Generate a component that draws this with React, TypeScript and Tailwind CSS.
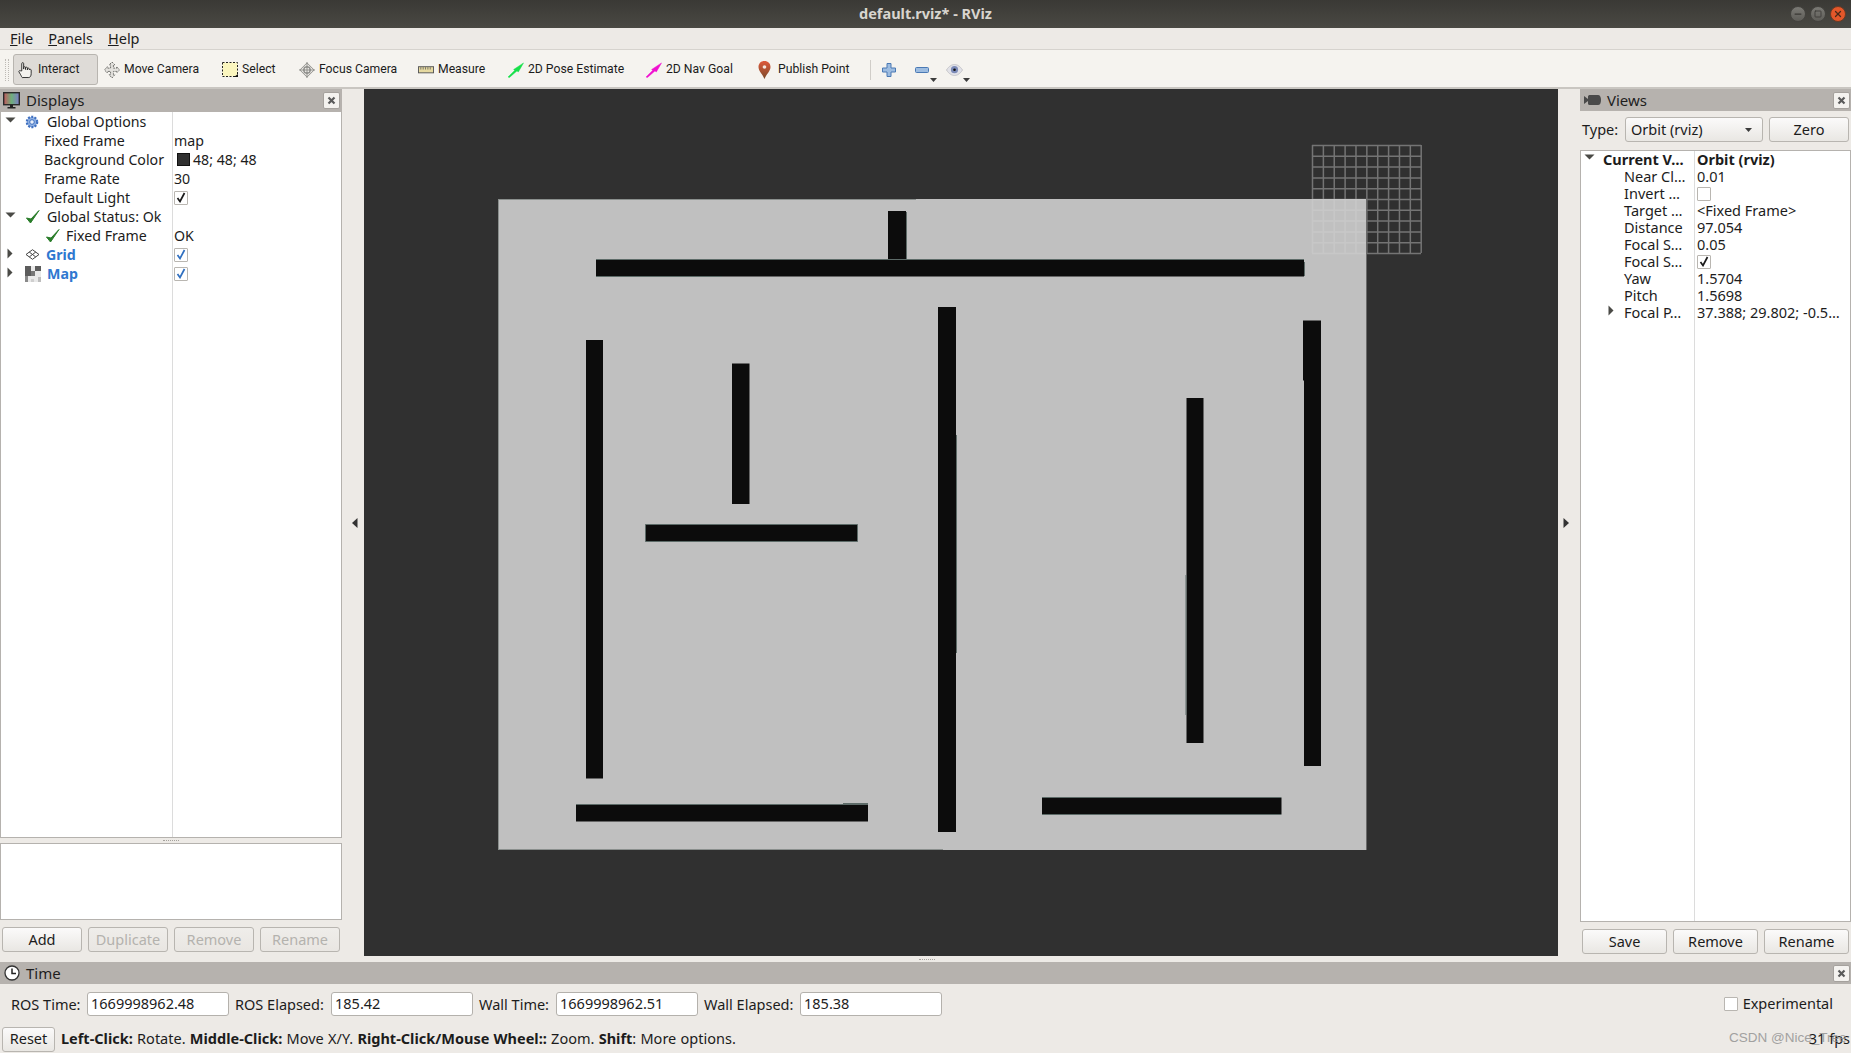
import React from 'react';
import { X, Minus, Square } from 'lucide-react';

// RViz main window, sizes read off the 1851x1053 capture
const ui = "font-['Noto_Sans','Open_Sans',sans-serif]";

const Arrow = ({ open }: { open?: boolean }) =>
  open ? (
    <svg width="11" height="10" viewBox="0 0 11 10"><path d="M.5 2.500h10L5.500 7.500z" fill="#4a4a46" /></svg>
  ) : (
    <svg width="10" height="11" viewBox="0 0 10 11"><path d="M2.500 .5v10L7.500 5.500z" fill="#4a4a46" /></svg>
  );

const Check = ({ on, blue }: { on?: boolean; blue?: boolean }) => (
  <div className="w-[14px] h-[14px] bg-white border border-[#b9b6b1] rounded-[1px] flex items-center justify-center">
    {on && (
      <svg width="10" height="11" viewBox="0 0 10 11">
        <path d="M1.500 6 L4 9.500 L8.500 1" fill="none" stroke={blue ? '#2f6fc0' : '#1a1a1a'} strokeWidth="1.700" />
      </svg>
    )}
  </div>
);

const OkMark = () => (
  <svg width="16" height="16" viewBox="0 0 16 16">
    <path d="M1.500 9 L5.500 14 L14 1.500 L6 10 Z" fill="#2a7d2a" stroke="#2a7d2a" strokeWidth="1" strokeLinejoin="round" />
  </svg>
);

const CloseBox = () => (
  <div className="w-[17px] h-[17px] bg-[#f4f2ef] border border-[#a5a19d] rounded-[2px] flex items-center justify-center">
    <svg width="9" height="9" viewBox="0 0 9 9"><path d="M1.500 1.500l6 6M7.500 1.500l-6 6" stroke="#5a5a5a" strokeWidth="2.200" /></svg>
  </div>
);

const Btn = ({ label, off, w }: { label: string; off?: boolean; w: string }) => (
  <div
    className={`${w} h-[25px] flex items-center justify-center rounded-[3px] border border-[#b8b5b0] bg-gradient-to-b text-[14.5px] ${
      off ? 'from-[#efedea] to-[#e9e6e2] text-[#b4b2ae]' : 'from-[#fbfafa] to-[#e9e7e3] text-[#1c1c1c]'
    }`}
  >
    {label}
  </div>
);

const Field = ({ value, w }: { value: string; w: string }) => (
  <div className={`${w} h-[24px] bg-white border border-[#b4b1ac] rounded-[3px] pl-[3px] flex items-center text-[14.5px] text-[#1c1c1c]`}>
    {value}
  </div>
);

const DockTitle = ({ icon, title, h, pad }: { icon: React.ReactNode; title: string; h: string; pad: string }) => (
  <div className={`${h} ${pad} bg-[#b6b2ae] flex items-center shrink-0`}>
    {icon}
    <span className="text-[15px] text-[#1e1e1e] ml-[6px] flex-1">{title}</span>
    <CloseBox />
  </div>
);

const Row = ({
  arrow,
  icon,
  name,
  value,
  nameClass = '',
  indent = 'pl-[43px]',
}: {
  arrow?: 'open' | 'closed';
  icon?: React.ReactNode;
  name: string;
  value?: React.ReactNode;
  nameClass?: string;
  indent?: string;
}) => (
  <div className="flex h-[19px] items-center text-[14.2px] text-[#1c1c1c]">
    <div className={`w-[171px] flex items-center relative ${indent} ${nameClass}`}>
      {arrow && (
        <span className="absolute left-[4px] top-[4px]">
          <Arrow open={arrow === 'open'} />
        </span>
      )}
      {icon}
      <span className="whitespace-nowrap">{name}</span>
    </div>
    <div className="pl-[2px] flex items-center">{value}</div>
  </div>
);

const VRow = ({ name, value, bold, arrow }: { name: string; value?: React.ReactNode; bold?: boolean; arrow?: 'open' | 'closed' }) => (
  <div className={`flex h-[17px] items-center text-[14.5px] text-[#1c1c1c] ${bold ? 'font-bold' : ''}`}>
    <div className={`w-[113px] relative whitespace-nowrap ${bold ? 'pl-[22px]' : 'pl-[43px]'}`}>
      {arrow === 'open' && (
        <span className="absolute left-[3px] top-[3px]"><Arrow open /></span>
      )}
      {arrow === 'closed' && (
        <span className="absolute left-[25px] top-[3px]"><Arrow /></span>
      )}
      {name}
    </div>
    <div className="pl-[3px] whitespace-nowrap flex items-center">{value}</div>
  </div>
);

const Tool = ({ w, active, icon, label }: { w: string; active?: boolean; icon: React.ReactNode; label: string }) => (
  <div
    className={`${w} h-[31px] flex items-center gap-[4px] text-[12.2px] whitespace-nowrap text-[#1c1c1c] font-['Roboto',sans-serif] ${
      active ? 'pl-[4px] bg-[#dedbd7] border border-[#b8b5b0] rounded-[3px]' : 'pl-[6px]'
    }`}
  >
    <span className="w-[16px] h-[18px] flex items-center justify-start shrink-0">{icon}</span>
    {label}
  </div>
);

const HandIcon = () => (
  <svg width="17" height="18" viewBox="0 0 17 18">
    <path d="M4 10V2.200a1 1 0 0 1 2 0V8V6.500a1 1 0 0 1 2 0V8.500V7a1 1 0 0 1 2 0V9V8a1 1 0 0 1 2 0v1 c0-1 2-1 2 0v4c0 2-1 4-2.500 4h-7C4 17 3.500 15 2.500 13.500L1 11c-.5-1 1-2 2-1z" fill="#f4f2ee" stroke="#2b2b2b" strokeWidth="1" />
  </svg>
);

const MoveIcon = () => (
  <svg width="17" height="18" viewBox="0 0 17 18">
    <path d="M8.500 .5l3 3H10v3.500h3.500V5.500l3 3.500-3 3V10.500H10V14h1.500l-3 3.500-3-3.500H7v-3.500H3.500V12l-3-3 3-3.500V7H7V3.500H5.500z" fill="#e4e2de" stroke="#6a6a66" strokeWidth="1" strokeDasharray="2 1" />
  </svg>
);

const SelectIcon = () => (
  <svg width="16" height="16" viewBox="0 0 16 16">
    <rect x=".5" y=".5" width="15" height="14" fill="#fbf6bf" stroke="#222" strokeDasharray="2 1.500" />
    <path d="M12 15h4v-3z" fill="#111" />
  </svg>
);

const FocusIcon = () => (
  <svg width="18" height="18" viewBox="0 0 18 18" fill="none" stroke="#8a8a86">
    <path d="M9 1l8 8-8 8-8-8z" fill="#e8e6e2" />
    <circle cx="9" cy="9" r="4" />
    <path d="M9 0v18M0 9h18M6 6h6v6H6z" />
  </svg>
);

const RulerIcon = () => (
  <svg width="17" height="8" viewBox="0 0 17 8">
    <rect x=".5" y=".5" width="16" height="6.500" fill="#e6d9a0" stroke="#555" />
    <path d="M3 1v2.500M5.500 1v2.500M8 1v2.500M10.500 1v2.500M13 1v2.500" stroke="#555" strokeWidth=".8" />
  </svg>
);

const SlantArrow = ({ color }: { color: string }) => (
  <svg width="17" height="16" viewBox="0 0 17 16">
    <path d="M0 15.500L7 8.500L6 7.500L16.500 .5L11 10L9.500 9L1.500 16z" fill={color} stroke={color} strokeWidth=".5" />
  </svg>
);

const PinIcon = () => (
  <svg width="13" height="18" viewBox="0 0 13 18">
    <defs>
      <linearGradient id="pin" x1="0" y1="0" x2="0" y2="1">
        <stop offset="0" stopColor="#de5a3c" />
        <stop offset="1" stopColor="#7a4a2a" />
      </linearGradient>
    </defs>
    <path d="M6.500 0C3 0 .5 2.500.5 6c0 4 4 7 6 12 2-5 6-8 6-12C12.500 2.500 10 0 6.500 0z" fill="url(#pin)" />
    <circle cx="6.500" cy="6" r="1.800" fill="#f2e9e2" />
  </svg>
);

const PlusIcon = () => (
  <svg width="14" height="14" viewBox="0 0 14 14">
    <path d="M5 .5h4V5h4.500v4H9v4.500H5V9H.5V5H5z" fill="#9dbce0" stroke="#4a79b4" />
  </svg>
);

const MinusIcon = () => (
  <svg width="14" height="6" viewBox="0 0 14 6">
    <rect x=".5" y=".5" width="13" height="5" rx="1" fill="#9dbce0" stroke="#4a79b4" />
  </svg>
);

const EyeIcon = () => (
  <svg width="17" height="12" viewBox="0 0 17 12">
    <path d="M.5 6C3 2 6 .5 8.500 .5S14 2 16.500 6c-2.500 4-5.500 5.500-8 5.500S3 10 .5 6z" fill="#e2e2e8" stroke="#c4c4c8" />
    <circle cx="8.500" cy="5.700" r="3.600" fill="#7c8bb8" />
    <circle cx="8.500" cy="5.700" r="1.300" fill="#111" />
  </svg>
);

const DropTick = () => (
  <svg width="7" height="4" viewBox="0 0 7 4"><path d="M0 0h7L3.500 4z" fill="#3c3c3c" /></svg>
);

const MonitorIcon = () => (
  <svg width="17" height="18" viewBox="0 0 17 18">
    <defs>
      <linearGradient id="scr" x1="0" y1="0" x2="1" y2="0">
        <stop offset="0" stopColor="#c4585c" />
        <stop offset=".5" stopColor="#6fae7c" />
        <stop offset="1" stopColor="#7c7cc8" />
      </linearGradient>
    </defs>
    <rect x=".7" y=".7" width="15.600" height="12" fill="url(#scr)" stroke="#2a2a2a" strokeWidth="1.400" />
    <path d="M7 13h3v2h2.500v1.500h-8V15H7z" fill="#222" />
  </svg>
);

const GearIcon = () => (
  <svg width="14" height="14" viewBox="0 0 14 14">
    <circle cx="7" cy="7" r="5.200" fill="#8fb0e2" stroke="#3f70c0" strokeWidth="2.200" strokeDasharray="2 1.300" />
    <circle cx="7" cy="7" r="2.300" fill="#eaf0fa" stroke="#3f70c0" />
  </svg>
);

const GridIcon = () => (
  <svg width="15" height="11" viewBox="0 0 15 11" fill="none" stroke="#444">
    <path d="M7.500 .7L14 5.500 7.500 10.300 1 5.500zM4.200 3l6.500 4.900M10.800 3L4.300 7.900" />
  </svg>
);

const MapIcon = () => (
  <svg width="16" height="16" viewBox="0 0 16 16" shapeRendering="crispEdges">
    <rect width="16" height="16" fill="#e9e9e9" />
    <rect width="6" height="10" fill="#5c5c5c" />
    <rect x="10" width="6" height="5" fill="#5c5c5c" />
    <rect x="6" y="5" width="4" height="5" fill="#777" />
    <rect y="10" width="3" height="6" fill="#8a8a8a" />
    <rect x="13" y="11" width="3" height="5" fill="#bdbdbd" />
    <rect x="6" y="13" width="3" height="3" fill="#cfcfcf" />
  </svg>
);

const CameraIcon = () => (
  <svg width="17" height="10" viewBox="0 0 17 10">
    <path d="M0 1l4 3V1.500C4 .5 5 0 6 0h8c2 0 3 2 3 5s-1 5-3 5H6c-1 0-2-.5-2-1.500V6l-4 3z" fill="#4a4a4a" />
  </svg>
);

const ClockIcon = () => (
  <svg width="16" height="16" viewBox="0 0 16 16">
    <circle cx="8" cy="8" r="7" fill="#fff" stroke="#333" strokeWidth="1.300" />
    <path d="M8 3.500V8.500H12" fill="none" stroke="#222" strokeWidth="1.500" />
  </svg>
);

const Dots = () => <div className="w-[16px] border-t border-dotted border-[#a5a29d]" />;

// wall rectangles of the occupancy grid, in page pixels
const walls = [
  [596, 259.500, 708, 17],
  [888, 211, 18, 49],
  [586, 340, 17, 438.500],
  [732, 363.500, 17.500, 140.500],
  [645.500, 524.500, 212, 17],
  [576, 804.500, 292, 17],
  [938, 307, 18, 525],
  [1186.500, 398, 17, 345],
  [1304, 378, 17, 388],
  [1303, 320.500, 18, 60],
  [1042, 797.500, 239.500, 17],
];

const gridLines = Array.from({ length: 11 }, (_, i) => i);

const MapView = () => (
  <svg className="block w-full h-full" viewBox="364 89 1194 867">
    <rect x="364" y="89" width="1194" height="867" fill="#303030" />
    <g stroke="#747474" strokeWidth="1.500">
      {gridLines.map(i => (
        <path key={i} d={`M${1312.5 + i * 10.87} 145V253M1312 ${145.5 + i * 10.8}H1421`} />
      ))}
    </g>
    {/* map is slightly see through, the grid shows as lighter lines */}
    <rect x="498.500" y="199" width="868" height="651" fill="#d0d0d0" fillOpacity="0.9" />
    <path d="M498.500 199.500H916M498.500 849.500H943M498.500 199V850" stroke="#8a8f8d" strokeWidth="1" fill="none" />
    <path d="M1366.500 199V850" stroke="#6a6a6a" strokeWidth="1" fill="none" />
    {walls.map(([x, y, w, h], i) => (
      <rect key={i} x={x} y={y} width={w} height={h} fill="#0c0c0c" />
    ))}
    <path
      d="M596 276.500H722M956.500 435V653M1186 575V715M906.500 212V259M1304.500 262V276M596 259.500H1304M645.500 524.500H857.500V541.500H645.500ZM1042 814.500H1281M1042 797.500H1281M576 804.500H868"
      stroke="#5d6b68"
      strokeWidth="1"
      fill="none"
    />
    <rect x="843" y="803" width="25" height="2" fill="#5d6b68" />
  </svg>
);

export default function App() {
  return (
    <div className={`${ui} w-[1851px] h-[1053px] overflow-hidden flex flex-col bg-[#edeae6] relative`}>
      {/* window title */}
      <div className="h-[28px] shrink-0 bg-gradient-to-b from-[#3a3935] to-[#4a4943] flex items-center relative">
        <span className="flex-1 text-center text-[14.5px] font-bold text-[#d8d5cf]">default.rviz* - RViz</span>
        <div className="absolute right-[5px] top-[6px] flex gap-[4px]">
          <div className="w-[16px] h-[16px] rounded-full bg-gradient-to-b from-[#7b7a75] to-[#5e5d58] border border-[#44433f] flex items-center justify-center">
            <Minus size={10} color="#3a3935" strokeWidth={3} />
          </div>
          <div className="w-[16px] h-[16px] rounded-full bg-gradient-to-b from-[#7b7a75] to-[#5e5d58] border border-[#44433f] flex items-center justify-center">
            <Square size={8} color="#3a3935" strokeWidth={2.500} />
          </div>
          <div className="w-[16px] h-[16px] rounded-full bg-[#e4572a] border border-[#6b3a24] flex items-center justify-center">
            <X size={10} color="#4a2a18" strokeWidth={3} />
          </div>
        </div>
      </div>

      {/* menu bar */}
      <div className="h-[22px] shrink-0 flex items-center pl-[10px] gap-[15px] text-[14.5px] text-[#1c1c1c] border-b border-[#d6d3ce]">
        <span><span className="underline">F</span>ile</span>
        <span><span className="underline">P</span>anels</span>
        <span><span className="underline">H</span>elp</span>
      </div>

      {/* tool bar */}
      <div className="h-[39px] shrink-0 bg-[#f5f3ef] border-b-2 border-[#c9c6c1] flex items-center pt-[2px]">
        <div className="w-[13px] pl-[5px] shrink-0">
          <div className="w-[4px] h-[22px] border-x border-dotted border-[#bdbab5]" />
        </div>
        <Tool w="w-[85px]" active icon={<HandIcon />} label="Interact" />
        <Tool w="w-[118px]" icon={<MoveIcon />} label="Move Camera" />
        <Tool w="w-[77px]" icon={<SelectIcon />} label="Select" />
        <Tool w="w-[119px]" icon={<FocusIcon />} label="Focus Camera" />
        <Tool w="w-[90px]" icon={<RulerIcon />} label="Measure" />
        <Tool w="w-[138px]" icon={<SlantArrow color="#17e04a" />} label="2D Pose Estimate" />
        <Tool w="w-[112px]" icon={<SlantArrow color="#f010d0" />} label="2D Nav Goal" />
        <Tool w="w-[118px]" icon={<PinIcon />} label="Publish Point" />
        <div className="w-px h-[20px] bg-[#d0cdc8]" />
        <div className="w-[11px] shrink-0" />
        <PlusIcon />
        <div className="w-[19px] shrink-0" />
        <MinusIcon />
        <div className="w-[1px] shrink-0" />
        <div className="pt-[20px]"><DropTick /></div>
        <div className="w-[9px] shrink-0" />
        <EyeIcon />
        <div className="pt-[20px]"><DropTick /></div>
      </div>

      {/* docks and 3d view */}
      <div className="h-[867px] shrink-0 flex">
        <div className="w-[342px] shrink-0 flex flex-col">
          <DockTitle icon={<MonitorIcon />} title="Displays" h="h-[23px]" pad="pl-[3px] pr-[2px]" />
          <div className="h-[726px] bg-white border border-t-0 border-[#b5b2ae] relative">
            <div className="absolute left-[171px] top-0 bottom-0 w-px bg-[#dcdcdc]" />
            <Row arrow="open" indent="pl-[24px]" icon={<span className="mr-[8px]"><GearIcon /></span>} name="Global Options" />
            <Row name="Fixed Frame" value="map" />
            <Row
              name="Background Color"
              value={
                <>
                  <span className="w-[13px] h-[13px] bg-[#303030] border border-[#111] mx-[3px]" />
                  <span>48; 48; 48</span>
                </>
              }
            />
            <Row name="Frame Rate" value="30" />
            <Row name="Default Light" value={<Check on />} />
            <Row arrow="open" indent="pl-[24px]" icon={<span className="mr-[6px]"><OkMark /></span>} name="Global Status: Ok" />
            <Row indent="pl-[44px]" icon={<span className="mr-[5px]"><OkMark /></span>} name="Fixed Frame" value="OK" />
            <Row arrow="closed" indent="pl-[24px]" nameClass="font-bold text-[#2f78d0]" icon={<span className="mr-[6px]"><GridIcon /></span>} name="Grid" value={<Check on blue />} />
            <Row arrow="closed" indent="pl-[24px]" nameClass="font-bold text-[#2f78d0]" icon={<span className="mr-[6px]"><MapIcon /></span>} name="Map" value={<Check on blue />} />
          </div>
          <div className="h-[5px] flex items-center justify-center"><Dots /></div>
          <div className="h-[77px] bg-white border border-[#b5b2ae]" />
          <div className="mt-[7px] flex gap-[6px] pl-[2px]">
            <Btn w="w-[80px]" label="Add" />
            <Btn w="w-[80px]" label="Duplicate" off />
            <Btn w="w-[80px]" label="Remove" off />
            <Btn w="w-[80px]" label="Rename" off />
          </div>
        </div>

        <div className="w-[22px] shrink-0 flex items-center justify-start pl-[10px]">
          <svg width="6" height="10" viewBox="0 0 6 10"><path d="M5.500 0v10L0 5z" fill="#333" /></svg>
        </div>

        <div className="w-[1194px] shrink-0 bg-[#303030]">
          <MapView />
        </div>

        <div className="w-[22px] shrink-0 flex items-center justify-start pl-[5px]">
          <svg width="6" height="10" viewBox="0 0 6 10"><path d="M.5 0v10L6 5z" fill="#333" /></svg>
        </div>

        <div className="w-[271px] shrink-0 flex flex-col">
          <DockTitle icon={<CameraIcon />} title="Views" h="h-[22px]" pad="pl-[4px] pr-[1px]" />
          <div className="h-[25px] mt-[6px] flex items-center pl-[2px] text-[14.5px] text-[#1c1c1c]">
            <span className="w-[43px]">Type:</span>
            <div className="w-[138px] h-[25px] flex items-center pl-[5px] pr-[10px] justify-between rounded-[3px] border border-[#b8b5b0] bg-gradient-to-b from-[#fbfafa] to-[#e9e7e3]">
              <span>Orbit (rviz)</span>
              <DropTick />
            </div>
            <Btn w="w-[80px] ml-[6px]" label="Zero" />
          </div>
          <div className="h-[772px] mt-[8px] bg-white border border-[#b5b2ae] relative">
            <div className="absolute left-[113px] top-0 bottom-0 w-px bg-[#dcdcdc]" />
            <VRow bold arrow="open" name="Current V…" value="Orbit (rviz)" />
            <VRow name="Near Cl…" value="0.01" />
            <VRow name="Invert …" value={<Check />} />
            <VRow name="Target …" value="<Fixed Frame>" />
            <VRow name="Distance" value="97.054" />
            <VRow name="Focal S…" value="0.05" />
            <VRow name="Focal S…" value={<Check on />} />
            <VRow name="Yaw" value="1.5704" />
            <VRow name="Pitch" value="1.5698" />
            <VRow arrow="closed" name="Focal P…" value="37.388; 29.802; -0.5…" />
          </div>
          <div className="mt-[7px] flex gap-[6px] pl-[2px]">
            <Btn w="w-[85px]" label="Save" />
            <Btn w="w-[85px]" label="Remove" />
            <Btn w="w-[85px]" label="Rename" />
          </div>
        </div>
      </div>

      {/* time panel */}
      <div className="h-[6px] shrink-0 flex items-center pl-[919px]"><Dots /></div>
      <div className="shrink-0">
        <DockTitle icon={<ClockIcon />} title="Time" h="h-[22px]" pad="pl-[4px] pr-[1px]" />
        <div className="h-[43px] flex items-start pt-[8px] text-[14.5px] text-[#1c1c1c]">
          <span className="w-[76px] ml-[11px] whitespace-nowrap leading-[24px]">ROS Time:</span>
          <Field w="w-[142px]" value="1669998962.48" />
          <span className="w-[96px] ml-[6px] whitespace-nowrap leading-[24px]">ROS Elapsed:</span>
          <Field w="w-[142px]" value="185.42" />
          <span className="w-[77px] ml-[6px] whitespace-nowrap leading-[24px]">Wall Time:</span>
          <Field w="w-[142px]" value="1669998962.51" />
          <span className="w-[96px] ml-[6px] whitespace-nowrap leading-[24px]">Wall Elapsed:</span>
          <Field w="w-[142px]" value="185.38" />
          <div className="ml-auto mr-[18px] h-[24px] flex items-center gap-[5px]">
            <Check />
            <span>Experimental</span>
          </div>
        </div>
        <div className="h-[24px] flex items-center pl-[2px] text-[14.5px] text-[#1c1c1c]">
          <Btn w="w-[53px]" label="Reset" />
          <span className="ml-[6px] whitespace-nowrap [word-spacing:0.5px]">
            <b>Left-Click:</b> Rotate. <b>Middle-Click:</b> Move X/Y. <b>Right-Click/Mouse Wheel::</b> Zoom. <b>Shift</b>: More options.
          </span>
          <span className="ml-auto mr-[1px]">31 fps</span>
        </div>
      </div>

      {/* csdn watermark pasted over the status bar */}
      <span className="absolute left-[1729px] top-[1028px] text-[13.5px] text-[#8f8f8f] font-['Liberation_Sans',sans-serif] whitespace-nowrap opacity-80">
        CSDN @Nice_Tree
      </span>
    </div>
  );
}
